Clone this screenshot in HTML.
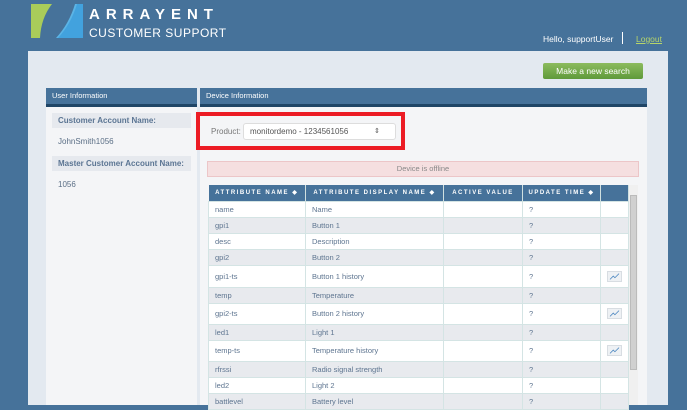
<!DOCTYPE html>
<html><head><meta charset="utf-8"><style>
*{margin:0;padding:0;box-sizing:border-box}
body{width:687px;height:405px;overflow:hidden;background:#46729a;font-family:"Liberation Sans",sans-serif;position:relative}
.a{position:absolute}
.t{font-size:8px;color:#5b6f86}
.hdr{background:#46729a;color:#fff;font-size:7.5px;border-bottom:3px solid #1f4566;line-height:16px;padding-left:6px}
table{border-collapse:collapse;font-size:7.5px;color:#5e7590}
td{border:1px solid #d4e4e4;padding-left:6px;height:16px}
th{background:#46729a;color:#fff;font-size:6px;letter-spacing:1.5px;height:16px;border-right:1px solid #d0e0e0}
tr.g td{background:#e8eaee}
tr.w td{background:#fff}
.ic{display:inline-block;width:15px;height:11px;background:#eef1f4;border:1px solid #d8dde2;vertical-align:middle}
</style></head><body>
<svg class="a" style="left:31px;top:4px" width="52" height="34"><path d="M0 0H21Q10 14 9 34H0Z" fill="#a9cc5a"/><path d="M52 0V34H25Q38 20 44 0Z" fill="#5bb4e6"/><path d="M52 0H46Q40 20 27 34H52Z" fill="#2a8fd6" opacity=".5"/></svg>
<div class="a" style="left:89px;top:6px;color:#fff;font-size:15px;font-weight:bold;letter-spacing:6px">ARRAYENT</div>
<div class="a" style="left:89px;top:26px;color:#fff;font-size:12px;letter-spacing:.5px">CUSTOMER SUPPORT</div>
<div class="a" style="left:543px;top:34px;color:#fff;font-size:8.5px">Hello, supportUser</div>
<div class="a" style="left:622px;top:32px;width:1px;height:12px;background:#fff"></div>
<div class="a" style="left:636px;top:34px;color:#b6d56a;font-size:8.5px;text-decoration:underline">Logout</div>
<div class="a" style="left:28px;top:51px;width:640px;height:354px;background:#e3e9f0"></div>
<div class="a" style="left:543px;top:63px;width:100px;height:16px;background:linear-gradient(#8cbb5e,#5f9a3a);border-radius:2px;color:#fff;font-size:8.5px;text-align:center;line-height:16px">Make a new search</div>
<div class="a hdr" style="left:46px;top:88px;width:151px">User Information</div>
<div class="a hdr" style="left:200px;top:88px;width:447px">Device Information</div>
<div class="a" style="left:46px;top:107px;width:151px;height:298px;background:#f4f5f7"></div>
<div class="a" style="left:200px;top:107px;width:447px;height:298px;background:#f4f5f7"></div>
<div class="a t" style="left:52px;top:113px;width:139px;height:15px;background:#e6e9ee;font-weight:bold;line-height:15px;padding-left:6px;color:#5b7593">Customer Account Name:</div>
<div class="a t" style="left:58px;top:137px">JohnSmith1056</div>
<div class="a t" style="left:52px;top:156px;width:139px;height:15px;background:#e6e9ee;font-weight:bold;line-height:15px;padding-left:6px;color:#5b7593">Master Customer Account Name:</div>
<div class="a t" style="left:58px;top:180px">1056</div>
<div class="a" style="left:196px;top:112px;width:209px;height:38px;border:4px solid #ec1c24"></div>
<div class="a t" style="left:211px;top:127px;color:#777">Product:</div>
<div class="a" style="left:243px;top:123px;width:153px;height:17px;background:#fff;border:1px solid #ddd;border-radius:3px;font-size:8px;color:#555;line-height:15px;padding-left:6px">monitordemo - 1234561056<span style="position:absolute;left:130px;font-size:7px">⇕</span></div>
<div class="a" style="left:207px;top:161px;width:432px;height:16px;background:#f5dfe0;border:1px solid #ecc6c8;font-size:7.5px;color:#888;text-align:center;line-height:14px">Device is offline</div>
<table class="a" style="left:208px;top:185px;width:421px">
<tr><th style="width:97px">ATTRIBUTE NAME ◆</th><th style="width:138px">ATTRIBUTE DISPLAY NAME ◆</th><th style="width:79px">ACTIVE VALUE</th><th style="width:78px">UPDATE TIME ◆</th><th></th></tr>
<tr class="w"><td>name</td><td>Name</td><td></td><td>?</td><td></td></tr>
<tr class="g"><td>gpi1</td><td>Button 1</td><td></td><td>?</td><td></td></tr>
<tr class="w"><td>desc</td><td>Description</td><td></td><td>?</td><td></td></tr>
<tr class="g"><td>gpi2</td><td>Button 2</td><td></td><td>?</td><td></td></tr>
<tr class="w"><td style="height:22px">gpi1-ts</td><td>Button 1 history</td><td></td><td>?</td><td><svg class="ic" viewBox="0 0 15 11"><path d="M2 9L6 5L8 7L13 2" stroke="#4a86c0" fill="none"/></svg></td></tr>
<tr class="g"><td>temp</td><td>Temperature</td><td></td><td>?</td><td></td></tr>
<tr class="w"><td style="height:21px">gpi2-ts</td><td>Button 2 history</td><td></td><td>?</td><td><svg class="ic" viewBox="0 0 15 11"><path d="M2 9L6 5L8 7L13 2" stroke="#4a86c0" fill="none"/></svg></td></tr>
<tr class="g"><td>led1</td><td>Light 1</td><td></td><td>?</td><td></td></tr>
<tr class="w"><td style="height:21px">temp-ts</td><td>Temperature history</td><td></td><td>?</td><td><svg class="ic" viewBox="0 0 15 11"><path d="M2 9L6 5L8 7L13 2" stroke="#4a86c0" fill="none"/></svg></td></tr>
<tr class="g"><td>rfrssi</td><td>Radio signal strength</td><td></td><td>?</td><td></td></tr>
<tr class="w"><td>led2</td><td>Light 2</td><td></td><td>?</td><td></td></tr>
<tr class="g"><td>battlevel</td><td>Battery level</td><td></td><td>?</td><td></td></tr>
</table>
<div class="a" style="left:629px;top:185px;width:9px;height:220px;background:#f0f0f0"></div>
<div class="a" style="left:630px;top:195px;width:7px;height:175px;background:#d0d0d0;border:1px solid #bbb"></div>
</body></html>
